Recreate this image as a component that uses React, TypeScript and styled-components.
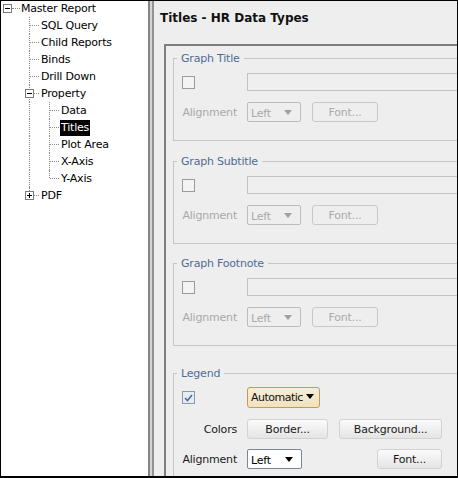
import React from "react";
import styled, { createGlobalStyle, css } from "styled-components";

// Tree rows in the order they are shown
interface TreeNode {
  label: string;
  level: number;
  expander?: "minus" | "plus";
  guides?: boolean[];
  last?: boolean;
  selected?: boolean;
}

const treeNodes: TreeNode[] = [
  { label: "Master Report", level: 0, expander: "minus" },
  { label: "SQL Query", level: 1 },
  { label: "Child Reports", level: 1 },
  { label: "Binds", level: 1 },
  { label: "Drill Down", level: 1 },
  { label: "Property", level: 1, expander: "minus" },
  { label: "Data", level: 2, guides: [true] },
  { label: "Titles", level: 2, guides: [true], selected: true },
  { label: "Plot Area", level: 2, guides: [true] },
  { label: "X-Axis", level: 2, guides: [true] },
  { label: "Y-Axis", level: 2, guides: [true], last: true },
  { label: "PDF", level: 1, expander: "plus", last: true },
];

const GlobalStyle = createGlobalStyle`
  html, body {
    margin: 0;
    padding: 0;
    background: #ffffff;
  }
  body {
    font-family: "DejaVu Sans", "Liberation Sans", sans-serif;
    font-size: 11px;
    letter-spacing: -0.2px;
  }
  * {
    box-sizing: border-box;
  }
`;

const Frame = styled.div`
  width: 458px;
  height: 478px;
  border: 1px solid #000;
  border-bottom-width: 2px;
  display: flex;
  overflow: hidden;
`;

const TreePane = styled.div`
  width: 147px;
  flex-shrink: 0;
  background: #fff;
  margin-top: -1px;
`;

const Row = styled.div`
  display: flex;
  align-items: center;
  height: 17px;
`;

const RootGutter = styled.div`
  position: relative;
  width: 18px;
  height: 17px;
  flex-shrink: 0;
`;

const dotted = "1px dotted #8a8a8a";

const Guide = styled.div<{ $line: boolean }>`
  position: relative;
  width: 20px;
  height: 17px;
  flex-shrink: 0;
  ${(p) =>
    p.$line &&
    css`
      &::before {
        content: "";
        position: absolute;
        left: 10px;
        top: 0;
        height: 17px;
        border-left: ${dotted};
      }
    `}
`;

const Connector = styled.div<{ $last?: boolean }>`
  position: relative;
  width: 20px;
  height: 17px;
  flex-shrink: 0;
  &::before {
    content: "";
    position: absolute;
    left: 10px;
    top: 0;
    height: ${(p) => (p.$last ? "8px" : "17px")};
    border-left: ${dotted};
  }
  &::after {
    content: "";
    position: absolute;
    left: 11px;
    top: 8px;
    width: 9px;
    border-top: ${dotted};
  }
`;

const RootLine = styled.div`
  position: absolute;
  left: 11px;
  top: 8px;
  width: 8px;
  border-top: ${dotted};
`;

const Expander = styled.div<{ $left: number; $plus?: boolean }>`
  position: absolute;
  left: ${(p) => p.$left}px;
  top: 4px;
  width: 9px;
  height: 9px;
  border: 1px solid #7a7a7a;
  background: #fff;
  z-index: 1;
  &::before {
    content: "";
    position: absolute;
    left: 1px;
    top: 3px;
    width: 5px;
    height: 1px;
    background: #000;
  }
  ${(p) =>
    p.$plus &&
    css`
      &::after {
        content: "";
        position: absolute;
        left: 3px;
        top: 1px;
        width: 1px;
        height: 5px;
        background: #000;
      }
    `}
`;

const NodeLabel = styled.span<{ $selected?: boolean }>`
  margin-left: 1px;
  padding: 0 1px;
  height: 16px;
  line-height: 16px;
  white-space: nowrap;
  color: ${(p) => (p.$selected ? "#fff" : "#000")};
  background: ${(p) => (p.$selected ? "#000" : "transparent")};
`;

const Splitter = styled.div`
  width: 6px;
  flex-shrink: 0;
  border-left: 2px solid #858585;
  border-right: 2px solid #939393;
  background: #d4d4d4;
`;

const RightPane = styled.div`
  flex: 1;
  min-width: 0;
  background: #eeeeee;
  display: flex;
  flex-direction: column;
  overflow: hidden;
`;

const Title = styled.div`
  padding: 10px 0 0 6px;
  height: 24px;
  line-height: 14px;
  font-size: 12px;
  font-weight: bold;
  letter-spacing: 0;
  color: #111;
  white-space: nowrap;
`;

const InnerPanel = styled.div`
  flex: 1;
  margin: 19px -60px 0 10px;
  border-top: 2px solid #7e7e7e;
  border-left: 2px solid #7e7e7e;
  padding: 6px 0 0 7px;
`;

const Group = styled.fieldset<{ $gap: number }>`
  margin: ${(p) => p.$gap}px 0 0 0;
  padding: 0 0 18px 8px;
  border: 1px solid #c6c6c6;
  min-width: 0;
`;

const GroupTitle = styled.legend`
  padding: 0 4px 0 4px;
  margin-left: -5px;
  line-height: 13px;
  color: #4f6c93;
`;

const FormRow = styled.div<{ $top: number; $height: number }>`
  display: grid;
  grid-template-columns: 55px 1fr;
  column-gap: 10px;
  align-items: center;
  margin-top: ${(p) => p.$top}px;
  height: ${(p) => p.$height}px;
`;

const Label = styled.span<{ $disabled?: boolean }>`
  text-align: right;
  white-space: nowrap;
  color: ${(p) => (p.$disabled ? "#a9a9a9" : "#1a1a1a")};
`;

const CheckBox = styled.div<{ $checked?: boolean }>`
  width: 13px;
  height: 13px;
  border: 1px solid ${(p) => (p.$checked ? "#8d99a6" : "#9b9b9b")};
  background: ${(p) => (p.$checked ? "#e6ecf2" : "#f3f3f3")};
  display: flex;
  align-items: center;
  justify-content: center;
`;

const TextField = styled.div`
  height: 18px;
  border: 1px solid #c2c2c2;
  background: #efefef;
  margin-right: 20px;
`;

const Controls = styled.div<{ $spread?: boolean }>`
  display: flex;
  align-items: center;
  gap: 11px;
  width: 195px;
  justify-content: ${(p) => (p.$spread ? "space-between" : "flex-start")};
`;

const Combo = styled.div<{ $disabled?: boolean }>`
  width: ${(p) => (p.$disabled ? 54 : 55)}px;
  height: 20px;
  display: flex;
  align-items: center;
  justify-content: space-between;
  padding: 2px 8px 0 3px;
  border: 1px solid ${(p) => (p.$disabled ? "#bcbcbc" : "#7b8794")};
  border-radius: 2px;
  background: ${(p) => (p.$disabled ? "#eeeeee" : "#ffffff")};
  color: ${(p) => (p.$disabled ? "#a9a9a9" : "#000")};
`;

const Arrow = styled.span<{ $disabled?: boolean }>`
  width: 0;
  height: 0;
  border-left: 4px solid transparent;
  border-right: 4px solid transparent;
  border-top: 5px solid ${(p) => (p.$disabled ? "#a0a0a0" : "#000")};
  margin-top: -2px;
`;

const Button = styled.div<{ $width: number; $disabled?: boolean }>`
  width: ${(p) => p.$width}px;
  height: 20px;
  display: flex;
  align-items: center;
  justify-content: center;
  border-radius: 3px;
  white-space: nowrap;
  ${(p) =>
    p.$disabled
      ? css`
          border: 1px solid #c8c8c8;
          background: #eeeeee;
          color: #ababab;
        `
      : css`
          border: 1px solid #d2d2d2;
          background: linear-gradient(#fbfbfb, #e4e4e4);
          color: #1a1a1a;
        `}
`;

const MenuButton = styled.div`
  width: 73px;
  height: 21px;
  display: flex;
  align-items: center;
  gap: 3px;
  padding: 0 0 0 3px;
  border: 1px solid #c29a5c;
  border-radius: 3px;
  background: linear-gradient(#f8eed6, #f1e2bf);
  color: #111;
  letter-spacing: -0.5px;
  white-space: nowrap;
`;

const Check = () => (
  <svg width="9" height="8" viewBox="0 0 9 8">
    <path d="M1 4 L3.5 6.5 L8 1" fill="none" stroke="#4a6b96" strokeWidth="1.6" />
  </svg>
);

const TreeRow: React.FC<{ node: TreeNode }> = ({ node }) => (
  <Row>
    <RootGutter>
      {node.level === 0 && (
        <>
          <Expander $left={2} />
          <RootLine />
        </>
      )}
    </RootGutter>
    {(node.guides || []).map((g, i) => (
      <Guide key={i} $line={g} />
    ))}
    {node.level > 0 && (
      <Connector $last={node.last}>
        {node.expander && <Expander $left={6} $plus={node.expander === "plus"} />}
      </Connector>
    )}
    <NodeLabel $selected={node.selected}>{node.label}</NodeLabel>
  </Row>
);

const DisabledGroup: React.FC<{ title: string; gap: number }> = ({ title, gap }) => (
  <Group $gap={gap}>
    <GroupTitle>{title}</GroupTitle>
    <FormRow $top={8} $height={18}>
      <CheckBox />
      <TextField />
    </FormRow>
    <FormRow $top={11} $height={20}>
      <Label $disabled>Alignment</Label>
      <Controls>
        <Combo $disabled>
          Left
          <Arrow $disabled />
        </Combo>
        <Button $width={66} $disabled>
          Font...
        </Button>
      </Controls>
    </FormRow>
  </Group>
);

const App: React.FC = () => {
  return (
    <>
      <GlobalStyle />
      <Frame>
        <TreePane>
          {treeNodes.map((node) => (
            <TreeRow key={node.label} node={node} />
          ))}
        </TreePane>
        <Splitter />
        <RightPane>
          <Title>Titles - HR Data Types</Title>
          <InnerPanel>
            <DisabledGroup title="Graph Title" gap={0} />
            <DisabledGroup title="Graph Subtitle" gap={14} />
            <DisabledGroup title="Graph Footnote" gap={13} />
            <Group $gap={21}>
              <GroupTitle>Legend</GroupTitle>
              <FormRow $top={7} $height={21}>
                <CheckBox $checked>
                  <Check />
                </CheckBox>
                <Controls>
                  <MenuButton>
                    Automatic
                    <Arrow />
                  </MenuButton>
                </Controls>
              </FormRow>
              <FormRow $top={11} $height={20}>
                <Label>Colors</Label>
                <Controls $spread>
                  <Button $width={83}>Border...</Button>
                  <Button $width={105}>Background...</Button>
                </Controls>
              </FormRow>
              <FormRow $top={10} $height={20}>
                <Label>Alignment</Label>
                <Controls $spread>
                  <Combo>
                    Left
                    <Arrow />
                  </Combo>
                  <Button $width={65}>Font...</Button>
                </Controls>
              </FormRow>
            </Group>
          </InnerPanel>
        </RightPane>
      </Frame>
    </>
  );
};

export default App;
